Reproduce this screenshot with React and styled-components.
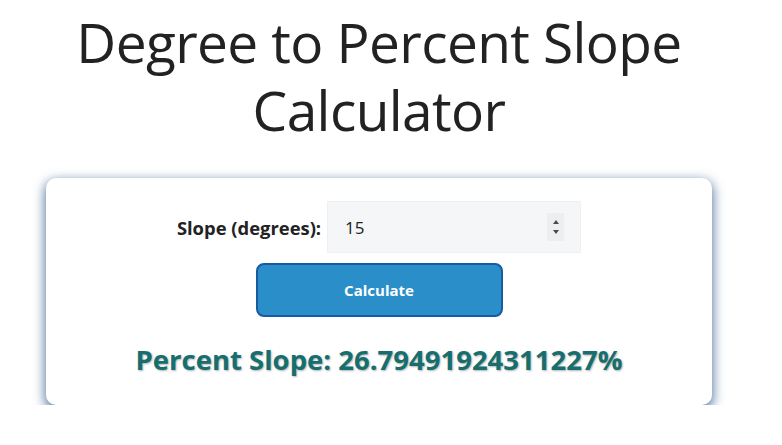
import { useState } from "react";
import styled, { createGlobalStyle } from "styled-components";

const GlobalStyle = createGlobalStyle`
  body {
    margin: 0;
    background: #ffffff;
    font-family: "Open Sans", "Noto Sans", sans-serif;
    color: #222;
  }
`;

const Page = styled.div`
  width: 758px;
  display: flex;
  flex-direction: column;
  align-items: center;
`;

const Title = styled.h1`
  margin: 8px 0 0;
  font-size: 55px;
  font-weight: 400;
  line-height: 68px;
  text-align: center;
  color: #222;
  letter-spacing: -0.6px;
`;

const Card = styled.div`
  margin-top: 34px;
  width: 666px;
  height: 227px;
  box-sizing: border-box;
  background: #fff;
  border-radius: 10px;
  box-shadow: 0 4px 12px 1px rgba(45, 85, 140, 0.8);
  display: flex;
  flex-direction: column;
  align-items: center;
  padding-top: 23px;
`;

const Row = styled.div`
  display: flex;
  align-items: center;
  gap: 6px;
`;

const Label = styled.label`
  font-size: 18.4px;
  font-weight: 700;
  color: #222;
`;

const Field = styled.div`
  position: relative;
  width: 254px;
  height: 52px;
`;

const Input = styled.input`
  width: 100%;
  height: 100%;
  box-sizing: border-box;
  padding: 0 40px 0 17px;
  border: 1px solid #eef0f2;
  background: #f5f6f8;
  font-family: inherit;
  font-size: 17px;
  color: #222;
  outline: none;
  -moz-appearance: textfield;
  &::-webkit-inner-spin-button,
  &::-webkit-outer-spin-button {
    -webkit-appearance: none;
    margin: 0;
  }
`;

const Spinner = styled.div`
  position: absolute;
  right: 17px;
  top: 12px;
  width: 17px;
  height: 28px;
  background: #eceef0;
  display: flex;
  flex-direction: column;
  align-items: center;
  justify-content: center;
  gap: 6px;
  cursor: pointer;
`;

const Arrow = styled.span`
  width: 0;
  height: 0;
  border-left: 3.5px solid transparent;
  border-right: 3.5px solid transparent;
  ${(p) => (p.$up ? "border-bottom: 4px solid #4a4a4a;" : "border-top: 4px solid #4a4a4a;")}
`;

const Button = styled.button`
  margin-top: 10px;
  width: 247px;
  height: 54px;
  background: #2a8fc9;
  border: 2px solid #175ba0;
  border-radius: 8px;
  color: #fff;
  font-family: inherit;
  font-size: 15px;
  font-weight: 700;
  cursor: pointer;
`;

const Result = styled.div`
  margin-top: 24px;
  font-size: 27.5px;
  font-weight: 700;
  color: #166f6e;
  text-shadow: 1px 1px 2px rgba(0, 0, 0, 0.3);
`;

export default function App() {
  const [deg, setDeg] = useState("15");
  const [result, setResult] = useState(Math.tan((15 * Math.PI) / 180) * 100);
  const step = (d) => setDeg(String((parseFloat(deg) || 0) + d));

  return (
    <>
      <GlobalStyle />
      <Page>
        <Title>
          Degree to Percent Slope
          <br />
          Calculator
        </Title>
        <Card>
          <Row>
            <Label htmlFor="deg">Slope (degrees):</Label>
            <Field>
              <Input id="deg" type="number" value={deg} onChange={(e) => setDeg(e.target.value)} />
              <Spinner>
                <Arrow $up onClick={() => step(1)} />
                <Arrow onClick={() => step(-1)} />
              </Spinner>
            </Field>
          </Row>
          <Button onClick={() => setResult(Math.tan((parseFloat(deg) * Math.PI) / 180) * 100)}>
            Calculate
          </Button>
          <Result>Percent Slope: {result}%</Result>
        </Card>
      </Page>
    </>
  );
}
